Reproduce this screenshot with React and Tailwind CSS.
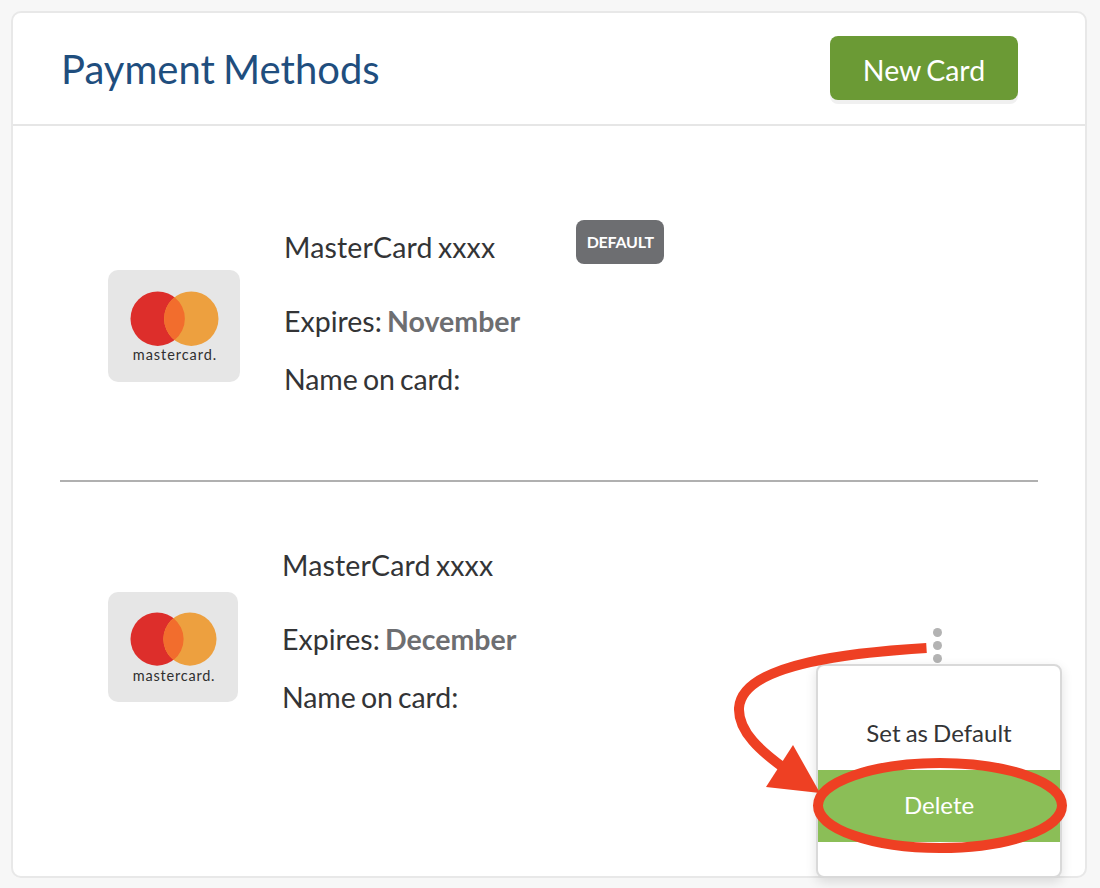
const FONT = "font-['Lato','Noto_Sans',sans-serif]"

function MastercardLogo({ className, markClass, wordClass }) {
  return (
    <div className={`flex flex-col items-center justify-center rounded-[10px] bg-[#e6e6e6] pt-[2px] ${className}`}>
      <svg viewBox="0 0 90 56" className={`block ${markClass}`}>
        <circle cx="28" cy="28" r="27.5" fill="#dd2e2b" />
        <circle cx="62" cy="28" r="27.5" fill="#eda03f" />
        <path d="M45 6.4a27.5 27.5 0 0 1 0 43.2a27.5 27.5 0 0 1 0-43.2z" fill="#f26d2d" />
      </svg>
      <span className={`mt-px pl-[2px] leading-[16px] text-[#2f2f2f] ${wordClass}`}>mastercard.</span>
    </div>
  )
}

function CardRow({ month, badge, children, rowClass, logoClass, markClass, wordClass }) {
  return (
    <div className={`flex items-start pl-[95px] ${rowClass}`}>
      <MastercardLogo className={logoClass} markClass={markClass} wordClass={wordClass} />
      <div className="ml-[44px] text-[28.5px] leading-[34px] text-[#333436] [word-spacing:-2px]">
        <div className="flex items-start">
          <span className="whitespace-nowrap tracking-[0.14px]">MasterCard xxxx</span>
          {badge && (
            <span className="ml-[81px] -mt-[10px] flex h-[44px] w-[88px] items-center justify-center rounded-[8px] bg-[#6d6e71] pb-px text-[16px] font-bold tracking-[-0.2px] text-white">
              DEFAULT
            </span>
          )}
        </div>
        <div className="mt-10 whitespace-nowrap">
          Expires: <span className="font-bold text-[#6d6e71]">{month}</span>
        </div>
        <div className="mt-6 whitespace-nowrap tracking-[-0.08px]">Name on card:</div>
      </div>
      {children}
    </div>
  )
}

export default function App() {
  return (
    <div className={`h-[888px] overflow-hidden bg-[#f7f7f7] pt-[11px] pl-[11px] ${FONT}`}>
      <div className="relative h-[867px] w-[1076px] rounded-[10px] border-2 border-[#e8e8e8] bg-white">
        {/* Header */}
        <div className="flex h-[113px] items-start justify-between border-b-2 border-[#e6e6e6] pt-[23px] pr-[67px] pl-[48px]">
          <h1 className="mt-[9px] text-[40px] leading-[48px] font-normal text-[#1f4e7e] [word-spacing:-2px]">Payment Methods</h1>
          <button className="h-[64px] w-[188px] rounded-[8px] bg-[#6b9a35] pt-1 text-[28.5px] text-white shadow-[0_4px_0_#f0f0f0] [word-spacing:-2px]">
            New Card
          </button>
        </div>

        {/* Saved cards */}
        <CardRow
          month="November"
          badge
          rowClass="pt-[104px] pb-[84px]"
          logoClass="mt-[40px] h-[112px] w-[132px]"
          markClass="w-[89px]"
          wordClass="text-[14.5px] tracking-[0.95px]"
        />
        <div className="mx-[47px] border-t-2 border-[#b0b0b0]" />
        <CardRow
          month="December"
          rowClass="pt-[66px]"
          logoClass="mt-[44px] h-[110px] w-[130px]"
          markClass="w-[87px]"
          wordClass="text-[14.5px] tracking-[0.8px]"
        />

        {/* Kebab trigger */}
        <div className="absolute top-[615px] left-[920px] flex flex-col gap-1">
          <span className="size-[9px] rounded-full bg-[#b3b3b3]" />
          <span className="size-[9px] rounded-full bg-[#b3b3b3]" />
          <span className="size-[9px] rounded-full bg-[#b3b3b3]" />
        </div>

        {/* Dropdown menu */}
        <div className="absolute top-[651px] left-[803px] flex h-[214px] w-[246px] flex-col rounded-[8px] border-2 border-[#d9d9d9] bg-white shadow-[0_4px_12px_rgba(0,0,0,0.12)]">
          <div className="mt-[50px] flex h-[34px] items-center justify-center text-[24px] text-[#333436] [word-spacing:-1px]">Set as Default</div>
          <div className="mt-[20px] flex h-[72px] items-center justify-center bg-[#8bbe57] pb-[2px] text-[24px] text-white">Delete</div>
        </div>
      </div>

      {/* Red annotation drawn over the screenshot */}
      <svg className="pointer-events-none absolute top-0 left-0" width="1100" height="888" viewBox="0 0 1100 888" fill="none">
        <path d="M926.5 648C860 652 742 662 739 708C738 732 762 752 784 768" stroke="#ee4023" strokeWidth="10" />
        <path d="M793 745L766 787L820 793Z" fill="#ee4023" />
        <ellipse cx="940" cy="805.5" rx="122" ry="42.5" stroke="#ee4023" strokeWidth="10" />
      </svg>
    </div>
  )
}
